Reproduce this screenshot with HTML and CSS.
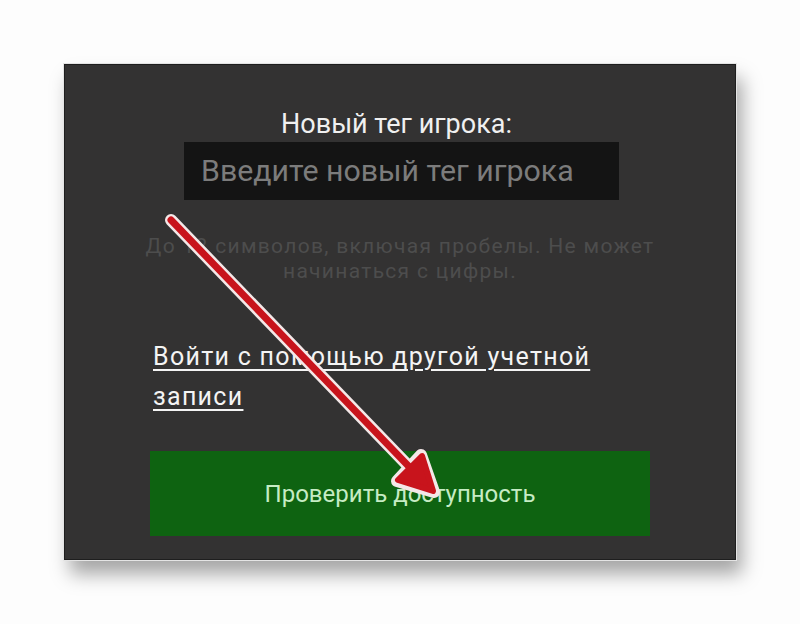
FILE: index.html
```html
<!DOCTYPE html>
<html lang="ru">
<head>
<meta charset="utf-8">
<link rel="stylesheet" href="styles.css">
</head>
<body>
<div class="stage">
  <div class="panel">
    <div class="title">Новый тег игрока:</div>
    <div class="input">Введите новый тег игрока</div>
    <div class="hint">До 12 символов, включая пробелы. Не может<br>начинаться с цифры.</div>
    <a class="link" href="#">Войти с помощью другой учетной записи</a>
    <div class="button">Проверить доступность</div>
  </div>
  <svg class="arrow" width="800" height="624" viewBox="0 0 800 624">
    <g stroke-linecap="round" stroke-linejoin="round" fill="none">
      <line x1="171" y1="220" x2="420" y2="478" stroke="#f4e8e8" stroke-width="12"/>
      <path d="M397 481 L434 492 L421 455 Z" stroke="#f4e8e8" stroke-width="12" fill="#f4e8e8"/>
      <line x1="171" y1="220" x2="420" y2="478" stroke="#c8141c" stroke-width="7"/>
      <path d="M398 480 L433 491 L422 456 Z" stroke="#c8141c" stroke-width="6" fill="#c8141c"/>
    </g>
  </svg>
</div>
</body>
</html>
```
FILE: styles.css
```css
* { box-sizing: border-box; }
html, body { margin: 0; padding: 0; background: #fdfdfd; }
body { font-family: Roboto, "Noto Sans", sans-serif; }
.stage {
  position: relative;
  width: 800px;
  height: 624px;
  padding: 64px 64px 0 64px;
}
.panel {
  width: 672px;
  height: 496px;
  background: #333232;
  border: 1px solid #1e1e1e;
  outline: 1px solid #e4e4e4;
  box-shadow: 6px 14px 18px rgba(0,0,0,0.35);
  display: flex;
  flex-direction: column;
  align-items: center;
  padding-top: 41px;
}
.title {
  color: #f0f0f0;
  font-size: 27px;
  line-height: 36px;
  margin-right: 7px;
}
.input {
  width: 435px;
  height: 58px;
  background: #141414;
  color: #7c7c7c;
  font-size: 30.3px;
  line-height: 58px;
  padding-left: 17px;
  margin-left: 3px;
}
.hint {
  margin-top: 34px;
  color: #4d4d4d;
  font-size: 21px;
  line-height: 25px;
  text-align: center;
  letter-spacing: 1.3px;
}
.link {
  align-self: flex-start;
  margin-left: 88px;
  margin-top: 53px;
  width: 490px;
  color: #f4f4f4;
  font-size: 25px;
  line-height: 40px;
  letter-spacing: 1.3px;
  text-decoration: underline;
  text-underline-offset: 4px;
  text-decoration-thickness: 2px;
}
.button {
  align-self: flex-start;
  margin-left: 85px;
  margin-top: 34px;
  width: 500px;
  height: 85px;
  background: #0e6311;
  color: #c6ecc4;
  font-size: 24px;
  display: flex;
  align-items: center;
  justify-content: center;
}
.arrow {
  position: absolute;
  left: 0;
  top: 0;
  pointer-events: none;
}
```
